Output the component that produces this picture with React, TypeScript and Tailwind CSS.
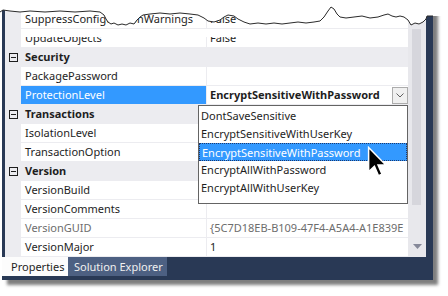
import type { ReactNode } from "react";

const font = { fontFamily: '"Noto Sans", "Segoe UI", sans-serif' };

function MinusBox() {
  return (
    <div className="flex h-[9px] w-[9px] items-center justify-center border border-[#1e1e1e] bg-[#ececf0]">
      <div className="h-px w-[5px] bg-[#1e1e1e]" />
    </div>
  );
}

function Category({ label }: { label: string }) {
  return (
    <div className="flex h-[19px] bg-[#ececf0]">
      <div className="flex h-[18px] w-[16px] items-center justify-center pl-[1px]">
        <MinusBox />
      </div>
      <div className="h-[18px] pl-[4px] text-[11px] font-bold leading-[18px] text-[#1e1e1e]">{label}</div>
    </div>
  );
}

interface PropProps {
  name: string;
  value?: string;
  gray?: boolean;
  selected?: boolean;
  bold?: boolean;
  clipTop?: boolean;
  children?: ReactNode;
}

function Prop({ name, value, gray, selected, bold, clipTop, children }: PropProps) {
  return (
    <div className="relative flex h-[19px] bg-[#ececf0]">
      <div className="w-[16px]" />
      <div
        className={`h-[18px] w-[185px] overflow-hidden whitespace-nowrap pl-[4px] text-[11px] leading-[18px] ${
          selected ? "bg-[#3399ff] text-white" : gray ? "bg-white text-[#6d6d6d]" : "bg-white text-[#1e1e1e]"
        }`}
      >
        {name}
      </div>
      <div className="w-px" />
      <div
        className={`relative h-[18px] flex-1 overflow-hidden whitespace-nowrap bg-white pl-[3px] text-[11px] leading-[18px] ${
          gray ? "text-[#6d6d6d]" : "text-[#1e1e1e]"
        } ${bold ? "font-bold" : ""}`}
      >
        {value}
      </div>
      {clipTop && <div className="absolute left-[16px] right-0 top-0 h-[8px] bg-white" />}
      {children}
    </div>
  );
}

const options = [
  "DontSaveSensitive",
  "EncryptSensitiveWithUserKey",
  "EncryptSensitiveWithPassword",
  "EncryptAllWithPassword",
  "EncryptAllWithUserKey",
];

function Dropdown() {
  return (
    <div className="absolute left-[193px] top-[19px] z-10 h-[99px] w-[210px] border border-[#646464] bg-white pt-px">
      {options.map((o, i) => (
        <div
          key={o}
          className={`h-[18px] whitespace-nowrap pl-[2px] text-[11px] leading-[17px] ${
            i === 2 ? "border border-dotted border-[#1e3a6e] bg-[#3399ff] pl-[1px] leading-[16px] text-white" : "text-[#1e1e1e]"
          }`}
        >
          {o}
        </div>
      ))}
    </div>
  );
}

function DropButton() {
  return (
    <div className="absolute right-0 top-px flex h-[17px] w-[16px] items-center justify-center border border-[#acacac] bg-[#f0f0f0]">
      <svg width="8" height="5" viewBox="0 0 8 5">
        <path d="M0.5 0.5 L4 4 L7.5 0.5" fill="none" stroke="#606060" strokeWidth="1" />
      </svg>
    </div>
  );
}

function Cursor() {
  return (
    <svg className="absolute left-[367px] top-[146px] z-20" width="20" height="32" viewBox="0 0 13 21">
      <path
        d="M1 1 L1 17 L4.8 13.3 L7.5 19.5 L9.8 18.5 L7.2 12.5 L12.3 12.5 Z"
        fill="#000"
        stroke="#fff"
        strokeWidth="1"
        strokeLinejoin="miter"
      />
    </svg>
  );
}

const tear =
  "0,12 3,10 10,11 20,12 30,11 45,12 60,11 75,12 90,11 100,12 104,15 106,19 108,22 111,24 114,23 118,25 122,24 126,25 130,23 134,24 137,20 140,17 143,15 150,14 160,13 170,14 180,13 190,14 198,15 204,18 208,21 214,22 220,20 224,17 228,15 234,16 238,19 244,22 250,24 258,23 266,24 274,23 282,24 290,23 298,22 306,23 314,22 320,21 324,17 328,11 331,7 334,9 337,14 340,17 346,18 354,17 362,16 370,18 378,17 384,15 388,14 392,16 396,17 400,16 404,17 408,20 411,25 415,23 419,24 423,22 426,19 427,16 433,16";

export default function App() {
  return (
    <div className="relative h-[296px] w-[448px] overflow-hidden bg-white" style={font}>
      <div className="ml-[2px] mt-[4px] flex h-[276px] w-[431px] flex-col bg-[#293955] pl-[3px] pr-[7px] shadow-[5px_5px_3px_rgba(0,0,0,0.5)]">
        <div className="flex h-[253px]">
          {/* property grid */}
          <div className="flex w-[403px] flex-col bg-[#ececf0]">
            <div className="h-[6px] bg-white" />
            <Prop name="SuppressConfigurationWarnings" value="False" />
            <Prop name="UpdateObjects" value="False" clipTop />
            <Category label="Security" />
            <Prop name="PackagePassword" />
            <Prop name="ProtectionLevel" value="EncryptSensitiveWithPassword" selected bold>
              <div className="absolute right-0 top-0 h-[18px] w-[16px]">
                <DropButton />
              </div>
              <Dropdown />
            </Prop>
            <Category label="Transactions" />
            <Prop name="IsolationLevel" />
            <Prop name="TransactionOption" />
            <Category label="Version" />
            <Prop name="VersionBuild" />
            <Prop name="VersionComments" />
            <Prop name="VersionGUID" value="{5C7D18EB-B109-47F4-A5A4-A1E839E" gray />
            <Prop name="VersionMajor" value="1" />
          </div>
          {/* scrollbar */}
          <div className="flex w-[18px] flex-col bg-[#e8e8ec]">
            <div className="ml-[4px] mt-[25px] h-[176px] w-[9px] bg-[#d6d6dc]" />
            <div className="flex flex-1 items-end justify-center pb-[8px]">
              <svg width="9" height="5" viewBox="0 0 9 5">
                <path d="M0 0 L9 0 L4.5 5 Z" fill="#868999" />
              </svg>
            </div>
          </div>
        </div>
        {/* tabs */}
        <div className="-ml-[3px] flex h-[19px] whitespace-nowrap text-[11px] leading-[19px]">
          <div className="w-[66px] bg-[#fcfcfc] pl-[9px] text-[#1e1e1e]">Properties</div>
          <div className="w-[99px] bg-[#4d6082] pl-[6px] text-[#f0f0f0]">Solution Explorer</div>
        </div>
      </div>
      <Cursor />
      <svg className="pointer-events-none absolute left-0 top-0" width="448" height="32" viewBox="0 0 448 32">
        <polygon points={`${tear} 448,16 448,0 0,0`} fill="#fff" />
        <polyline points={tear} fill="none" stroke="#2b2b2b" strokeWidth="1" />
      </svg>
    </div>
  );
}
